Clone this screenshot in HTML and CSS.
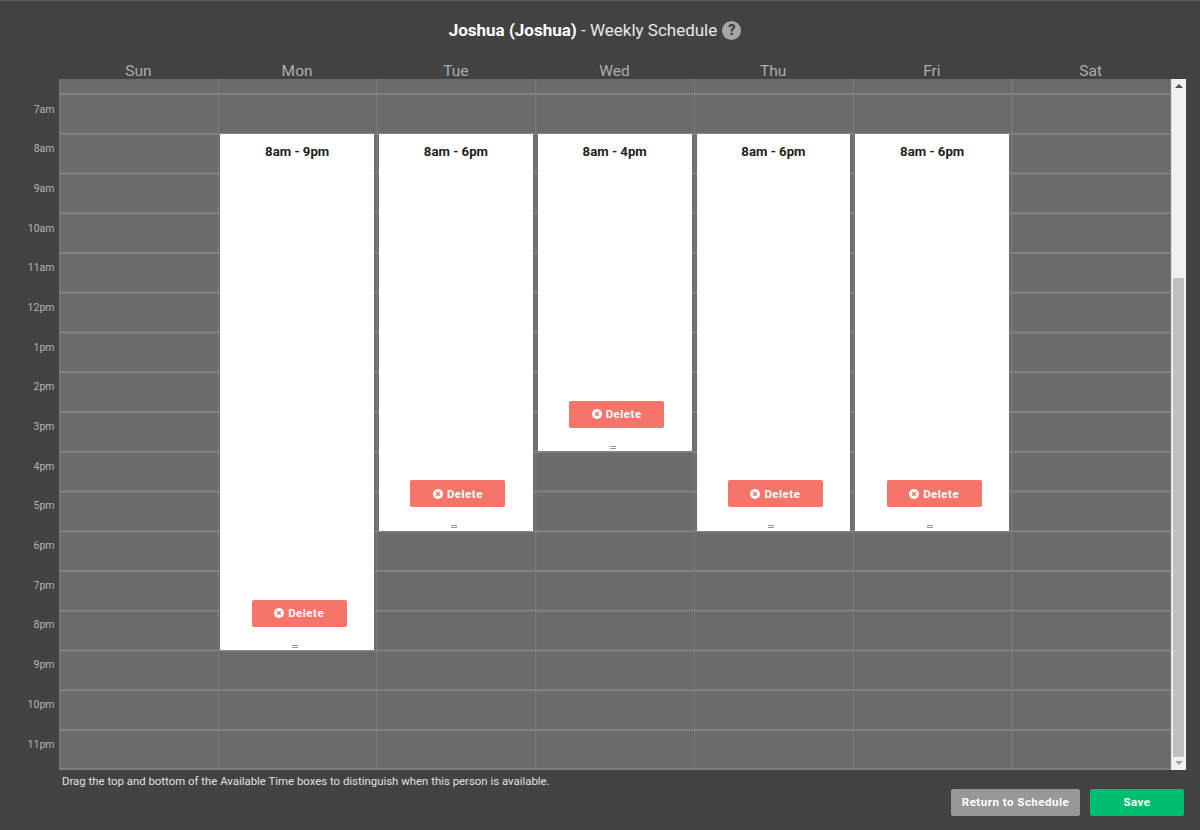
FILE: index.html
```html
<!DOCTYPE html>
<html lang="en">
<head>
  <meta charset="UTF-8">
  <title>Weekly Schedule</title>
  <link rel="stylesheet" href="styles.css">
</head>
<body>
  <div class="page">
    <h2 class="title">
      <span><strong>Joshua (Joshua)</strong> - Weekly Schedule</span>
      <span class="help">?</span>
    </h2>

    <div class="day-names">
      <div>Sun</div>
      <div>Mon</div>
      <div>Tue</div>
      <div>Wed</div>
      <div>Thu</div>
      <div>Fri</div>
      <div>Sat</div>
    </div>

    <div class="schedule">
      <div class="hours">
        <div>7am</div>
        <div>8am</div>
        <div>9am</div>
        <div>10am</div>
        <div>11am</div>
        <div>12pm</div>
        <div>1pm</div>
        <div>2pm</div>
        <div>3pm</div>
        <div>4pm</div>
        <div>5pm</div>
        <div>6pm</div>
        <div>7pm</div>
        <div>8pm</div>
        <div>9pm</div>
        <div>10pm</div>
        <div>11pm</div>
      </div>

      <div class="calendar">
        <div class="slot mon until-9pm">
          <div class="slot-time">8am - 9pm</div>
          <button class="delete"><svg viewBox="0 0 10 10"><circle cx="5" cy="5" r="5" fill="#fff"/><path d="M3.3 3.3l3.4 3.4M6.7 3.3l-3.4 3.4" stroke="#f5756a" stroke-width="1.5"/></svg>Delete</button>
          <div class="handle"></div>
        </div>
        <div class="slot tue until-6pm">
          <div class="slot-time">8am - 6pm</div>
          <button class="delete"><svg viewBox="0 0 10 10"><circle cx="5" cy="5" r="5" fill="#fff"/><path d="M3.3 3.3l3.4 3.4M6.7 3.3l-3.4 3.4" stroke="#f5756a" stroke-width="1.5"/></svg>Delete</button>
          <div class="handle"></div>
        </div>
        <div class="slot wed until-4pm">
          <div class="slot-time">8am - 4pm</div>
          <button class="delete"><svg viewBox="0 0 10 10"><circle cx="5" cy="5" r="5" fill="#fff"/><path d="M3.3 3.3l3.4 3.4M6.7 3.3l-3.4 3.4" stroke="#f5756a" stroke-width="1.5"/></svg>Delete</button>
          <div class="handle"></div>
        </div>
        <div class="slot thu until-6pm">
          <div class="slot-time">8am - 6pm</div>
          <button class="delete"><svg viewBox="0 0 10 10"><circle cx="5" cy="5" r="5" fill="#fff"/><path d="M3.3 3.3l3.4 3.4M6.7 3.3l-3.4 3.4" stroke="#f5756a" stroke-width="1.5"/></svg>Delete</button>
          <div class="handle"></div>
        </div>
        <div class="slot fri until-6pm">
          <div class="slot-time">8am - 6pm</div>
          <button class="delete"><svg viewBox="0 0 10 10"><circle cx="5" cy="5" r="5" fill="#fff"/><path d="M3.3 3.3l3.4 3.4M6.7 3.3l-3.4 3.4" stroke="#f5756a" stroke-width="1.5"/></svg>Delete</button>
          <div class="handle"></div>
        </div>
      </div>

      <div class="scrollbar">
        <div class="arrow-up"></div>
        <div class="thumb"></div>
        <div class="arrow-down"></div>
      </div>
    </div>

    <div class="footer">
      <p class="hint">Drag the top and bottom of the Available Time boxes to distinguish when this person is available.</p>
      <div class="actions">
        <button class="btn btn-return">Return to Schedule</button>
        <button class="btn btn-save">Save</button>
      </div>
    </div>
  </div>
</body>
</html>
```

FILE: styles.css
```css
html, body {
  margin: 0;
  height: 830px;
  overflow: hidden;
}
body {
  font-family: Roboto, "Liberation Sans", sans-serif;
  background: #424242;
  color: #fff;
}
.page {
  height: 830px;
  box-sizing: border-box;
  border-top: 1px solid #5c5c5c;
  display: flex;
  flex-direction: column;
}
.title {
  margin: 0;
  height: 58px;
  padding-right: 10px;
  display: flex;
  align-items: center;
  justify-content: center;
  gap: 5px;
  font-size: 17px;
  font-weight: 400;
  color: #e8e8e8;
}
.title strong {
  font-weight: 700;
  color: #fff;
}
.help {
  width: 19px;
  height: 19px;
  border-radius: 50%;
  background: #a6a6a6;
  color: #424242;
  font-size: 15px;
  font-weight: 900;
  line-height: 19px;
  text-align: center;
}
.day-names {
  margin-left: 59px;
  width: 1111px;
  height: 20px;
  display: grid;
  grid-template-columns: repeat(7, 1fr);
  font-size: 15.5px;
  line-height: 24px;
  text-align: center;
  color: #adadad;
}
.schedule {
  display: flex;
  height: 691px;
}
.hours {
  width: 54.5px;
  margin-right: 4.5px;
  padding-top: 10.5px;
  font-size: 10.5px;
  color: #b5b5b5;
  text-align: right;
}
.hours div {
  height: 39.7px;
  line-height: 40px;
}
.calendar {
  width: 1111.5px;
  box-sizing: border-box;
  display: grid;
  grid-template-columns: repeat(7, 158.75px);
  grid-template-rows: 15px repeat(17, 39.75px);
  background-color: #6b6b6b;
  background-image:
    linear-gradient(to bottom, transparent 38.25px, #828282 38.25px, #828282 39.75px),
    linear-gradient(to right, transparent 157.5px, #7e7e7e 157.5px, #7e7e7e 158.75px);
  background-size: 100% 39.75px, 158.75px 100%;
  background-position: 0 16px, 0 0;
  border-left: 1px solid #7a7a7a;
  border-bottom: 2px solid #7d7d7d;
}
.slot {
  grid-row-start: 3;
  margin: 0 3.5px 0.5px 1.6px;
  background: #fff;
  color: #222;
  display: flex;
  flex-direction: column;
  align-items: center;
}
.mon { grid-column: 2; }
.tue { grid-column: 3; }
.wed { grid-column: 4; }
.thu { grid-column: 5; }
.fri { grid-column: 6; }
.until-9pm { grid-row-end: 16; }
.until-6pm { grid-row-end: 13; }
.until-4pm { grid-row-end: 11; }
.slot-time {
  margin-top: 10px;
  font-size: 13.2px;
  font-weight: 700;
  line-height: 16px;
}
.delete {
  margin-top: auto;
  margin-left: 4px;
  width: 95px;
  height: 27px;
  padding: 0;
  border: none;
  border-radius: 2px;
  background: #f5756a;
  color: #fff;
  font-family: inherit;
  font-size: 11.5px;
  font-weight: 700;
  letter-spacing: 0.5px;
  display: flex;
  align-items: center;
  justify-content: center;
  gap: 4px;
}
.delete svg {
  width: 10px;
  height: 10px;
}
.handle {
  width: 6px;
  height: 1px;
  margin: 18px 4px 2.5px 0;
  border-top: 1px solid #999;
  border-bottom: 1px solid #999;
}
.scrollbar {
  width: 15px;
  box-sizing: border-box;
  background: #f1f1f1;
  border-left: 1px solid #e0e0e0;
  display: flex;
  flex-direction: column;
  align-items: center;
  justify-content: space-between;
  padding: 5px 0;
}
.arrow-up {
  width: 0;
  height: 0;
  border-left: 4px solid transparent;
  border-right: 4px solid transparent;
  border-bottom: 4px solid #505050;
}
.arrow-down {
  width: 0;
  height: 0;
  border-left: 4px solid transparent;
  border-right: 4px solid transparent;
  border-top: 4px solid #a3a3a3;
}
.thumb {
  width: 11px;
  height: 479px;
  margin-top: auto;
  margin-bottom: 4px;
  background: #c1c1c1;
}
.footer {
  display: flex;
  justify-content: space-between;
  padding: 0 16px 0 62px;
}
.hint {
  margin: 4px 0 0;
  font-size: 11.4px;
  line-height: 15px;
  color: #e0e0e0;
}
.actions {
  margin-top: 19px;
  display: flex;
  gap: 10px;
}
.btn {
  height: 27px;
  padding: 0 0 2px;
  border: none;
  border-radius: 2px;
  color: #fff;
  font-family: inherit;
  font-size: 11.5px;
  font-weight: 700;
  letter-spacing: 0.5px;
}
.btn-return {
  width: 129px;
  background: #989898;
}
.btn-save {
  width: 94px;
  background: #00bd70;
}
```
